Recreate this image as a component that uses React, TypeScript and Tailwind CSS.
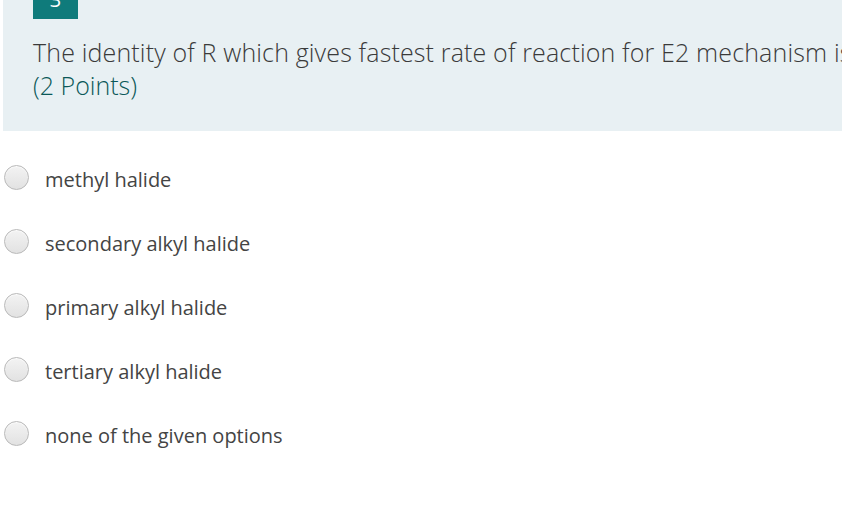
import React from 'react';

const options = [
  'methyl halide',
  'secondary alkyl halide',
  'primary alkyl halide',
  'tertiary alkyl halide',
  'none of the given options',
];

const App = () => {
  return (
    <div className="w-[842px] h-[507px] overflow-hidden bg-white" style={{ fontFamily: '"Open Sans", "Noto Sans", sans-serif' }}>
      <div className="ml-[3px] h-[131px] bg-[#e8f0f3] pl-[30px] overflow-hidden">
        <div className="w-[45px] h-[19px] bg-[#0f7b7b] overflow-hidden flex justify-center">
          <span className="text-white text-[20px] leading-none -mt-[10px]">3</span>
        </div>
        <div className="mt-[17px] text-[25px] font-light leading-[33px] tracking-[0.15px] text-[#3a3a3a] whitespace-nowrap">
          The identity of R which gives fastest rate of reaction for E2 mechanism is
        </div>
        <div className="text-[25px] font-light leading-[33px] text-[#0b5858]">(2 Points)</div>
      </div>

      <div className="pl-[4px] pt-[33px] flex flex-col gap-[38px]">
        {options.map((opt) => (
          <label key={opt} className="flex items-center gap-[16px] h-[26px]">
            <span className="w-[25px] h-[25px] rounded-full border border-[#b9b9b9] bg-gradient-to-b from-[#f3f3f3] to-[#e2e2e2] shadow-[inset_0_1px_1px_rgba(255,255,255,0.8)]" />
            <span className="text-[20px] text-[#444444] mt-[5px]">{opt}</span>
          </label>
        ))}
      </div>
    </div>
  );
};

export default App;
